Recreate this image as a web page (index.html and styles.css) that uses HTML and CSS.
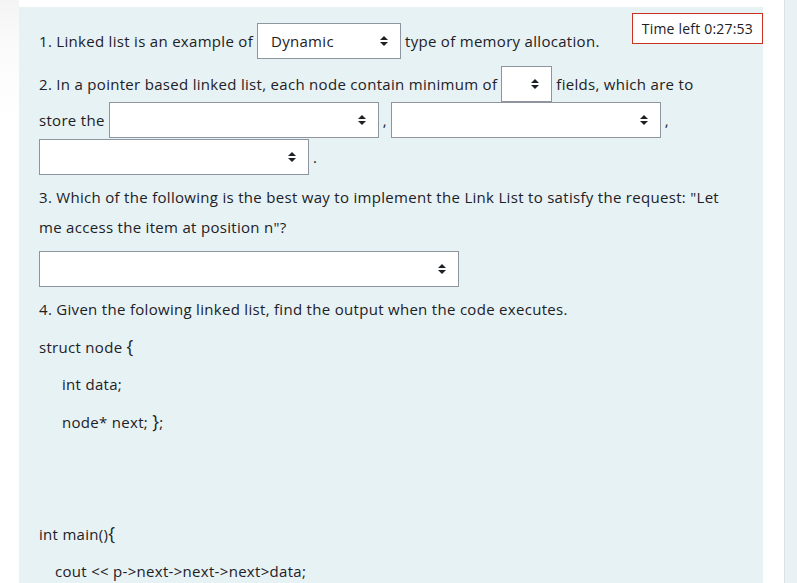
FILE: index.html
```html
<!DOCTYPE html>
<html lang="en">
<head>
    <meta charset="UTF-8">
    <meta name="viewport" content="width=device-width, initial-scale=1.0">
    <title>Quiz - Linked list</title>
    <link rel="stylesheet" href="styles.css">
</head>
<body>

    <div class="page">
        <div class="gutter"></div>

        <div class="main">
            <div class="timer">Time left 0:27:53</div>

            <div class="question">
                <div class="row">
                    <span>1. Linked list is an example of</span>
                    <div class="select w-dynamic"><span>Dynamic</span><svg class="arrow" viewBox="0 0 8 10"><path d="M4 0L8 4H0z M4 10L0 6H8z"/></svg></div>
                    <span>type of memory allocation.</span>
                </div>

                <div class="row gap-top">
                    <span>2. In a pointer based linked list, each node contain minimum of</span>
                    <div class="select w-small"><span></span><svg class="arrow" viewBox="0 0 8 10"><path d="M4 0L8 4H0z M4 10L0 6H8z"/></svg></div>
                    <span>fields, which are to</span>
                </div>
                <div class="row">
                    <span>store the</span>
                    <div class="select w-field"><span></span><svg class="arrow" viewBox="0 0 8 10"><path d="M4 0L8 4H0z M4 10L0 6H8z"/></svg></div>
                    <span class="punct">,</span>
                    <div class="select w-field"><span></span><svg class="arrow" viewBox="0 0 8 10"><path d="M4 0L8 4H0z M4 10L0 6H8z"/></svg></div>
                    <span class="punct">,</span>
                </div>
                <div class="row tight">
                    <div class="select w-field"><span></span><svg class="arrow" viewBox="0 0 8 10"><path d="M4 0L8 4H0z M4 10L0 6H8z"/></svg></div>
                    <span class="punct">.</span>
                </div>

                <p class="text">3. Which of the following is the best way to implement the Link List to satisfy the request: "Let<br>me access the item at position n"?</p>
                <div class="row gap-wide">
                    <div class="select w-wide"><span></span><svg class="arrow" viewBox="0 0 8 10"><path d="M4 0L8 4H0z M4 10L0 6H8z"/></svg></div>
                </div>

                <p class="text">4. Given the folowing linked list, find the output when the code executes.</p>
                <p class="text">struct node <span class="brace">{</span></p>
                <p class="text code-in">int data;</p>
                <p class="text code-in">node* next; <span class="brace">}</span>;</p>
                <p class="text">&nbsp;</p>
                <p class="text">&nbsp;</p>
                <p class="text">int main()<span class="brace">{</span></p>
                <p class="text code-in2">cout &lt;&lt; p-&gt;next-&gt;next-&gt;next&gt;data;</p>
            </div>
        </div>

        <div class="gutter-right"></div>
        <div class="drawer"></div>
    </div>

</body>
</html>
```

FILE: styles.css
```css
body {
    margin: 0;
    padding: 0;
    font-family: 'Open Sans', 'Liberation Sans', sans-serif;
    font-size: 15px;
    letter-spacing: 0.3px;
    color: #1d2125;
    background: #fff;
    overflow: hidden;
}

.page {
    display: flex;
    height: 583px;
}

.gutter {
    width: 19px;
    background: linear-gradient(#f4f4f4, #fafafa 40px, #fff 120px);
}

.main {
    position: relative;
    flex: 1;
    margin-top: 7px;
    background: #e7f2f5;
    padding: 16px 20px 0 20px;
}

.gutter-right {
    width: 21px;
    background: #fff;
    border-right: 1px solid #dbe3e8;
}

.drawer {
    width: 12px;
    background: #e9f1f5;
}

/* Contador de tiempo */
.timer {
    position: absolute;
    top: 6px;
    right: 0;
    height: 29px;
    line-height: 29px;
    padding: 0 9px;
    font-size: 14px;
    letter-spacing: 0.2px;
    background: #fff;
    border: 1px solid #ca3120;
}

.row {
    display: flex;
    align-items: center;
    gap: 4px;
    min-height: 36px;
}

.row.gap-top {
    margin-top: 7px;
}

.row.gap-wide {
    margin-top: 9px;
}

.row.tight {
    margin-top: 1px;
}

.select {
    box-sizing: border-box;
    height: 36px;
    display: flex;
    align-items: center;
    justify-content: space-between;
    padding: 0 12px 0 13px;
    background: #fff;
    border: 1px solid #8f959e;
}

.select .arrow {
    width: 8px;
    height: 10px;
    fill: #1d2125;
    flex-shrink: 0;
}

.w-dynamic { width: 144px; }
.w-small { width: 51px; }
.w-field { width: 270px; }
.w-wide { width: 420px; }

.text {
    margin: 7px 0 0 0;
    line-height: 30px;
}

.code-in {
    padding-left: 23px;
}

.code-in2 {
    padding-left: 16px;
}

.brace {
    font-size: 18px;
}
```
